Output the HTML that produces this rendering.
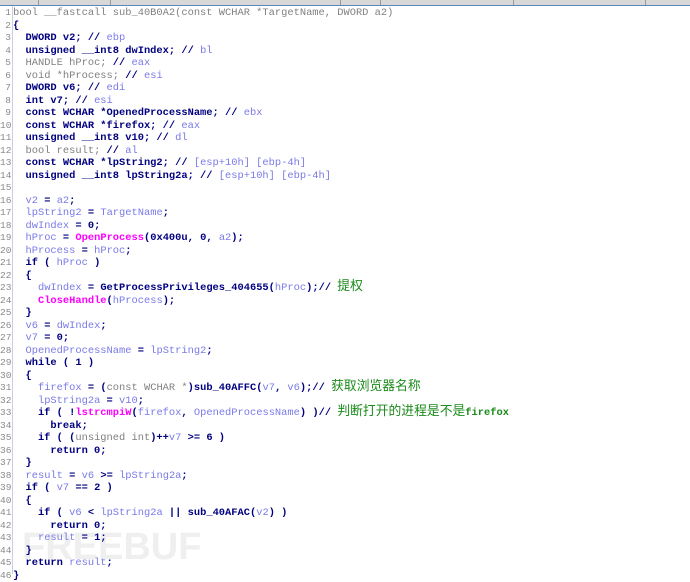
<!DOCTYPE html><html><head><meta charset="utf-8"><style>
body{margin:0;width:690px;height:574px;background:#fff;overflow:hidden;position:relative;font-family:"Liberation Mono","Noto Sans CJK SC",monospace;}
#tabs{position:absolute;left:0;top:0;width:690px;height:5px;background:#d8d8d8;border-bottom:1px solid #5a86c0}
#tabs i{position:absolute;top:0;height:5px;width:1px;background:#999}
#gut{position:absolute;left:0;top:6px;width:12px;height:568px;border-right:1px solid #c8d0e0}
#code{position:absolute;left:0;top:7px;font-size:10.4px;line-height:12.5px;white-space:pre;font-weight:bold;color:#000080}
.n{display:inline-block;width:11px;text-align:right;color:#888;font-weight:normal;font-size:9.5px;margin-right:2px}
.v{color:#7a7ae8;font-weight:normal}
.g{color:#808080;font-weight:normal}
.m{color:#ff00ff}
.c{color:#1a8a1a;font-weight:normal;font-size:12.8px;line-height:10px}
#wm{position:absolute;left:22px;top:526px;font:bold 38px "Liberation Sans",sans-serif;color:#efefef;letter-spacing:0px}
</style></head><body>
<div id="tabs"><i style="left:38px"></i><i style="left:110px"></i><i style="left:340px"></i><i style="left:380px"></i><i style="left:513px"></i><i style="left:645px"></i></div>
<div id="wm">FREEBUF</div>
<div id="gut"></div>
<div id="code"><span class="n">1</span><span class="g">bool __fastcall sub_40B0A2(const WCHAR *TargetName, DWORD a2)</span>
<span class="n">2</span>{
<span class="n">3</span>  DWORD v2; // <span class="v">ebp</span>
<span class="n">4</span>  unsigned __int8 dwIndex; // <span class="v">bl</span>
<span class="n">5</span>  <span class="g">HANDLE hProc;</span> // <span class="v">eax</span>
<span class="n">6</span>  <span class="g">void *hProcess;</span> // <span class="v">esi</span>
<span class="n">7</span>  DWORD v6; // <span class="v">edi</span>
<span class="n">8</span>  int v7; // <span class="v">esi</span>
<span class="n">9</span>  const WCHAR *OpenedProcessName; // <span class="v">ebx</span>
<span class="n">10</span>  const WCHAR *firefox; // <span class="v">eax</span>
<span class="n">11</span>  unsigned __int8 v10; // <span class="v">dl</span>
<span class="n">12</span>  <span class="g">bool result;</span> // <span class="v">al</span>
<span class="n">13</span>  const WCHAR *lpString2; // <span class="v">[esp+10h] [ebp-4h]</span>
<span class="n">14</span>  unsigned __int8 lpString2a; // <span class="v">[esp+10h] [ebp-4h]</span>
<span class="n">15</span>
<span class="n">16</span>  <span class="v">v2</span> = <span class="v">a2</span>;
<span class="n">17</span>  <span class="v">lpString2</span> = <span class="v">TargetName</span>;
<span class="n">18</span>  <span class="v">dwIndex</span> = 0;
<span class="n">19</span>  <span class="v">hProc</span> = <span class="m">OpenProcess</span>(0x400u, 0, <span class="v">a2</span>);
<span class="n">20</span>  <span class="v">hProcess</span> = <span class="v">hProc</span>;
<span class="n">21</span>  if ( <span class="v">hProc</span> )
<span class="n">22</span>  {
<span class="n">23</span>    <span class="v">dwIndex</span> = GetProcessPrivileges_404655(<span class="v">hProc</span>);// <span class="c">提权</span>
<span class="n">24</span>    <span class="m">CloseHandle</span>(<span class="v">hProcess</span>);
<span class="n">25</span>  }
<span class="n">26</span>  <span class="v">v6</span> = <span class="v">dwIndex</span>;
<span class="n">27</span>  <span class="v">v7</span> = 0;
<span class="n">28</span>  <span class="v">OpenedProcessName</span> = <span class="v">lpString2</span>;
<span class="n">29</span>  while ( 1 )
<span class="n">30</span>  {
<span class="n">31</span>    <span class="v">firefox</span> = (<span class="g">const WCHAR *</span>)sub_40AFFC(<span class="v">v7</span>, <span class="v">v6</span>);// <span class="c">获取浏览器名称</span>
<span class="n">32</span>    <span class="v">lpString2a</span> = <span class="v">v10</span>;
<span class="n">33</span>    if ( !<span class="m">lstrcmpiW</span>(<span class="v">firefox</span>, <span class="v">OpenedProcessName</span>) )// <span class="c">判断打开的进程是不是</span><span style="color:#1a8a1a">firefox</span>
<span class="n">34</span>      break;
<span class="n">35</span>    if ( (<span class="g">unsigned int</span>)++<span class="v">v7</span> &gt;= 6 )
<span class="n">36</span>      return 0;
<span class="n">37</span>  }
<span class="n">38</span>  <span class="v">result</span> = <span class="v">v6</span> &gt;= <span class="v">lpString2a</span>;
<span class="n">39</span>  if ( <span class="v">v7</span> == 2 )
<span class="n">40</span>  {
<span class="n">41</span>    if ( <span class="v">v6</span> &lt; <span class="v">lpString2a</span> || sub_40AFAC(<span class="v">v2</span>) )
<span class="n">42</span>      return 0;
<span class="n">43</span>    <span class="v">result</span> = 1;
<span class="n">44</span>  }
<span class="n">45</span>  return <span class="v">result</span>;
<span class="n">46</span>}</div>
</body></html>
